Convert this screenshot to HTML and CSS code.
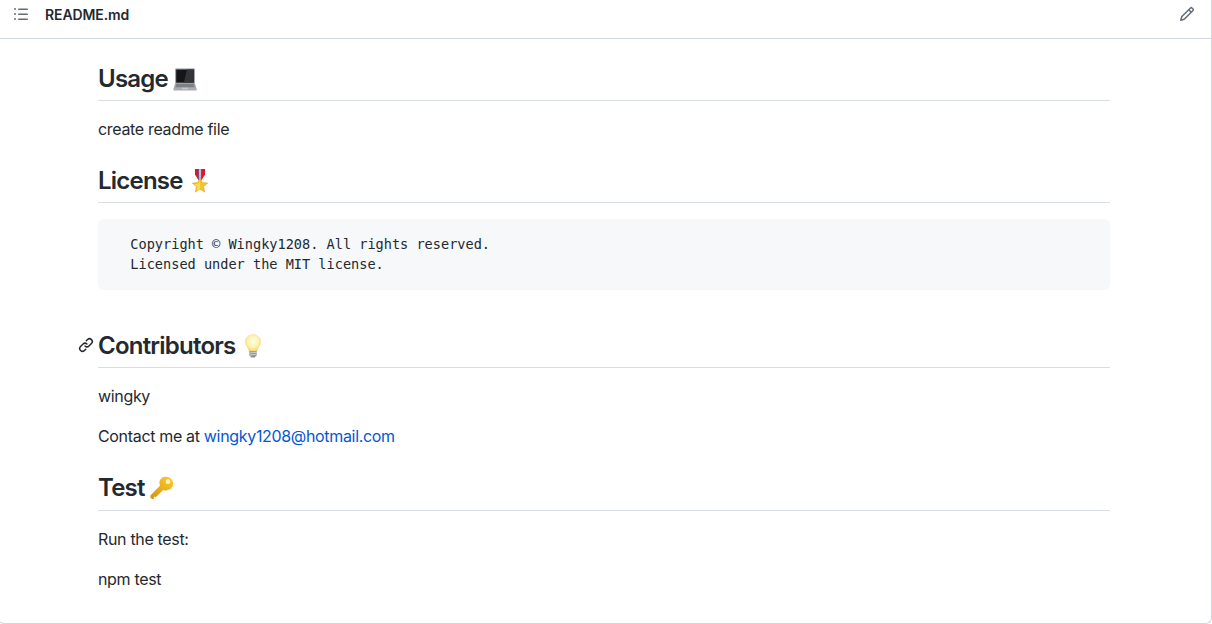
FILE: index.html
```html
<!DOCTYPE html>
<html lang="en">
<head>
<meta charset="utf-8">
<title>README.md</title>
<link rel="stylesheet" href="styles.css">
</head>
<body>
<div class="card">
  <header class="bar">
    <svg class="icon bar-list" viewBox="0 0 16 16"><path d="M5.75 2.5h8.5a.75.75 0 0 1 0 1.5h-8.5a.75.75 0 0 1 0-1.5Zm0 5h8.5a.75.75 0 0 1 0 1.5h-8.5a.75.75 0 0 1 0-1.5Zm0 5h8.5a.75.75 0 0 1 0 1.5h-8.5a.75.75 0 0 1 0-1.5ZM2 14a1 1 0 1 1 0-2 1 1 0 0 1 0 2Zm1-6a1 1 0 1 1-2 0 1 1 0 0 1 2 0ZM2 4a1 1 0 1 1 0-2 1 1 0 0 1 0 2Z"/></svg>
    <span class="bar-title">README.md</span>
    <svg class="icon bar-edit" viewBox="0 0 16 16"><path d="M11.013 1.427a1.75 1.75 0 0 1 2.474 0l1.086 1.086a1.75 1.75 0 0 1 0 2.474l-8.61 8.61c-.21.21-.47.364-.756.445l-3.251.93a.75.75 0 0 1-.927-.928l.929-3.25c.081-.286.235-.547.445-.758l8.61-8.61Zm.176 4.823L9.75 4.81l-6.286 6.287a.253.253 0 0 0-.064.108l-.558 1.953 1.953-.558a.253.253 0 0 0 .108-.064Zm1.238-3.763a.25.25 0 0 0-.354 0L10.811 3.75l1.439 1.44 1.263-1.263a.25.25 0 0 0 0-.354Z"/></svg>
  </header>
  <article class="body">
    <h2>Usage <svg class="emoji" viewBox="0 0 24 24">
      <path d="M3.2 1.6h17.6c.6 0 1 .4 1 1v13.6H2.2V2.6c0-.6.4-1 1-1Z" fill="#8d9096"/>
      <path d="M3.2 2.6h17.6v13H3.2Z" fill="#141518"/>
      <path d="M14 2.6h6.8v13h-10Z" fill="#33353b"/>
      <path d="M2.2 16h19.6l2 6.6c.1.5-.2.8-.7.8H1c-.5 0-.8-.3-.7-.8Z" fill="#a8abaf"/>
      <path d="M3.2 16.8h17.6l.9 3.4H2.3Z" fill="#7d8085"/>
      <path d="M9 20.8h6l.3 1.4H8.7Z" fill="#c6c8cb"/>
    </svg></h2>
    <p>create readme file</p>
    <h2>License <svg class="emoji" viewBox="0 0 24 24">
      <path d="M7 0h10v5.5L13.6 11h-3.2L7 5.5Z" fill="#e0142c"/>
      <path d="M10.4 0h3.2v11h-3.2Z" fill="#4a6cb8"/>
      <path d="M11.3 0h1.4v11h-1.4Z" fill="#e9e4df"/>
      <path d="M12 8.6l2.2 5 5.5.5-4.2 3.6 1.3 5.4-4.8-2.9-4.8 2.9 1.3-5.4-4.2-3.6 5.5-.5Z" fill="#f6c42c" stroke="#d29a16" stroke-width=".5"/>
      <path d="M12 10.5v9.8l-3.4 2 1-4.3-3.2-2.8 4.2-.4Z" fill="#fbdc58"/>
    </svg></h2>
    <pre class="code"><code>  Copyright © Wingky1208. All rights reserved.
  Licensed under the MIT license.</code></pre>
    <h2 class="anchored"><a class="anchor" href="#contributors" aria-label="Permalink"><svg class="icon" viewBox="0 0 16 16"><path d="m7.775 3.275 1.25-1.25a3.5 3.5 0 1 1 4.95 4.95l-2.5 2.5a3.5 3.5 0 0 1-4.95 0 .751.751 0 0 1 .018-1.042.751.751 0 0 1 1.042-.018 1.998 1.998 0 0 0 2.83 0l2.5-2.5a2.002 2.002 0 0 0-2.83-2.83l-1.25 1.25a.751.751 0 0 1-1.042-.018.751.751 0 0 1-.018-1.042Zm-4.69 9.64a1.998 1.998 0 0 0 2.83 0l1.25-1.25a.751.751 0 0 1 1.042.018.751.751 0 0 1 .018 1.042l-1.25 1.25a3.5 3.5 0 1 1-4.95-4.95l2.5-2.5a3.5 3.5 0 0 1 4.95 0 .751.751 0 0 1-.018 1.042.751.751 0 0 1-1.042.018 1.998 1.998 0 0 0-2.83 0l-2.5 2.5a1.998 1.998 0 0 0 0 2.83Z"/></svg></a>Contributors <svg class="emoji" viewBox="0 0 24 24">
      <defs><radialGradient id="bulb" cx=".5" cy=".4" r=".6"><stop offset="0" stop-color="#fffde8"/><stop offset=".6" stop-color="#fdf3b0"/><stop offset="1" stop-color="#f3d466"/></radialGradient></defs>
      <path d="M12 .6c4.2 0 7.6 3.2 7.6 7.3 0 3.2-2.4 5-3.2 7.6-.2.7-.3 1.4-.4 2H8c-.1-.6-.2-1.3-.4-2-.8-2.6-3.2-4.4-3.2-7.6C4.400 3.800 7.800.6 12 .6Z" fill="url(#bulb)" stroke="#ecd070" stroke-width=".4"/>
      <path d="M8.300 17.300h7.400v3.700c0 .6-.5 1-1 1.100l-.7 1.300h-4l-.7-1.300c-.5-.1-1-.5-1-1.100Z" fill="#8f8f8f"/>
      <path d="M8.300 18.600l7.400-.6v.9l-7.400.6Zm0 2l7.400-.6v.9l-7.400.6Z" fill="#d2d2d2"/>
    </svg></h2>
    <p>wingky</p>
    <p>Contact me at <a class="link" href="#mail">wingky1208@hotmail.com</a></p>
    <h2>Test <svg class="emoji" viewBox="0 0 24 24">
      <defs><linearGradient id="key" x1="0" y1="1" x2="1" y2="0"><stop offset="0" stop-color="#d4920f"/><stop offset="1" stop-color="#fdcd2f"/></linearGradient></defs>
      <path d="M16 .8c4 0 7.200 3 7.200 6.800s-3.200 6.900-7.200 6.900c-1 0-2-.2-2.900-.6L5.800 21.200l-1-.7-1 1.100.2 1.100-1.500.6-2.200-1.900.1-1.900L10.100 9.600c-.5-.9-.7-1.900-.7-2.900C9.400 3.500 12 .8 16 .8Z" fill="url(#key)"/>
      <circle cx="18" cy="5.700" r="2.400" fill="#fff3c4"/>
    </svg></h2>
    <p>Run the test:</p>
    <p>npm test</p>
  </article>
</div>
</body>
</html>
```
FILE: styles.css
```css
* { box-sizing: border-box; }
html, body { margin: 0; height: 100%; overflow: hidden; background: #fff; }
body { font-family: Inter, "Liberation Sans", sans-serif; font-size: 16px; line-height: 1.5; color: #24292f; }
.card { height: 624px; margin-left: -2px; border: 1px solid #d0d7de; border-top: 0; border-radius: 0 0 6px 6px; }
.bar { display: flex; align-items: flex-start; height: 39px; padding: 6px 16px 0 14px; border-bottom: 1px solid #d0d7de; }
.icon { width: 16px; height: 16px; fill: #636c76; flex: none; display: block; }
.bar-title { margin-left: 16px; font-size: 14px; font-weight: 600; line-height: 18px; letter-spacing: -.1px; color: #24292f; }
.bar-edit { margin-left: auto; }
.body { padding: 23.8px 101px 0 99px; }
h2 { position: relative; margin: 24px 0 16px; padding-bottom: 5.2px; border-bottom: 1px solid #d8dee4; font-size: 24px; font-weight: 600; line-height: 32px; letter-spacing: -.78px; }
.body > h2:first-child { margin-top: 0; }
.emoji { display: inline-block; width: 24px; height: 24px; vertical-align: -4px; }
p { margin: 0 0 16px; letter-spacing: -.33px; }
.code { margin: 0 0 40px; padding: 16px; background: #f6f8fa; border-radius: 6px; font-family: "DejaVu Sans Mono", monospace; font-size: 13.6px; line-height: 19.5px; letter-spacing: -.01px; }
.anchor { position: absolute; left: -20px; top: 7px; }
.anchor .icon { fill: #24292f; }
.link { color: #0556d6; text-decoration: none; }
```
